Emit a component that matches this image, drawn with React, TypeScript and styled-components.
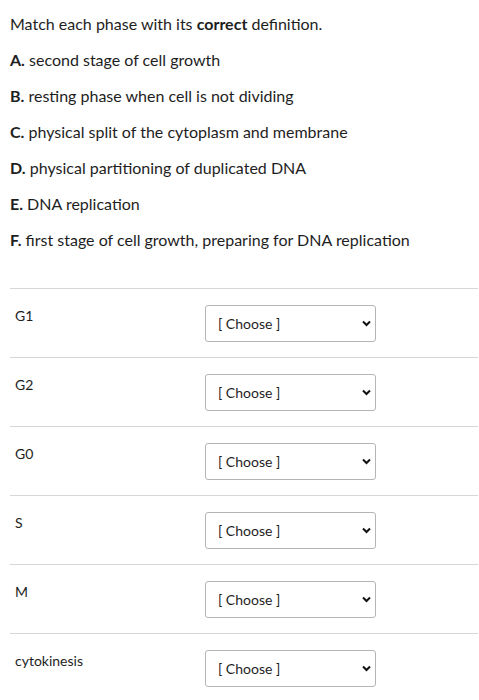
import React from "react";
import styled, { createGlobalStyle } from "styled-components";

const Global = createGlobalStyle`
  html, body { margin: 0; padding: 0; background: #fff; }
  body { font-family: Lato, "Open Sans", sans-serif; color: #1e1e1e; }
`;

const Page = styled.div`
  padding: 14px 1px 0 10px;
`;

const Para = styled.p`
  margin: 0 0 16px 0;
  font-size: 16px;
  line-height: 20px;
`;

const Definitions = styled.div`
  margin-bottom: 38px;
`;

const Row = styled.div`
  display: flex;
  align-items: flex-start;
  border-top: 1px solid #d7d7d7;
  padding: 16px 0 15px 0;
`;

const Label = styled.div`
  width: 195px;
  padding: 1px 0 0 5px;
  box-sizing: border-box;
  font-size: 14px;
  line-height: 20px;
`;

const SelectWrap = styled.div`
  position: relative;
  width: 171px;
  height: 37px;
`;

const Select = styled.select`
  appearance: none;
  -webkit-appearance: none;
  width: 100%;
  height: 100%;
  box-sizing: border-box;
  border: 1px solid #b5b5b5;
  border-radius: 3px;
  background: #fff;
  padding: 0 24px 0 12px;
  font-family: Lato, "Open Sans", sans-serif;
  font-size: 14px;
  color: #1e1e1e;
  outline: none;
`;

const Chevron = styled.svg`
  position: absolute;
  right: 5px;
  top: 15px;
  width: 9px;
  height: 7px;
  pointer-events: none;
`;

const defs: [string, string][] = [
  ["A.", "second stage of cell growth"],
  ["B.", "resting phase when cell is not dividing"],
  ["C.", "physical split of the cytoplasm and membrane"],
  ["D.", "physical partitioning of duplicated DNA"],
  ["E.", "DNA replication"],
  ["F.", "first stage of cell growth, preparing for DNA replication"],
];

const phases = ["G1", "G2", "G0", "S", "M", "cytokinesis"];

export default function App() {
  return (
    <>
      <Global />
      <Page>
        <Definitions>
          <Para>
            Match each phase with its <strong>correct</strong> definition.
          </Para>
          {defs.map(([k, v]) => (
            <Para key={k}>
              <strong>{k}</strong> {v}
            </Para>
          ))}
        </Definitions>
        {phases.map((p) => (
          <Row key={p}>
            <Label>{p}</Label>
            <SelectWrap>
              <Select defaultValue="">
                <option value="">[ Choose ]</option>
                {defs.map(([k, v]) => (
                  <option key={k} value={k}>
                    {v}
                  </option>
                ))}
              </Select>
              <Chevron viewBox="0 0 9 7">
                <path d="M1 1.5 L4.5 5 L8 1.5" fill="none" stroke="#111" strokeWidth="2" />
              </Chevron>
            </SelectWrap>
          </Row>
        ))}
      </Page>
    </>
  );
}
